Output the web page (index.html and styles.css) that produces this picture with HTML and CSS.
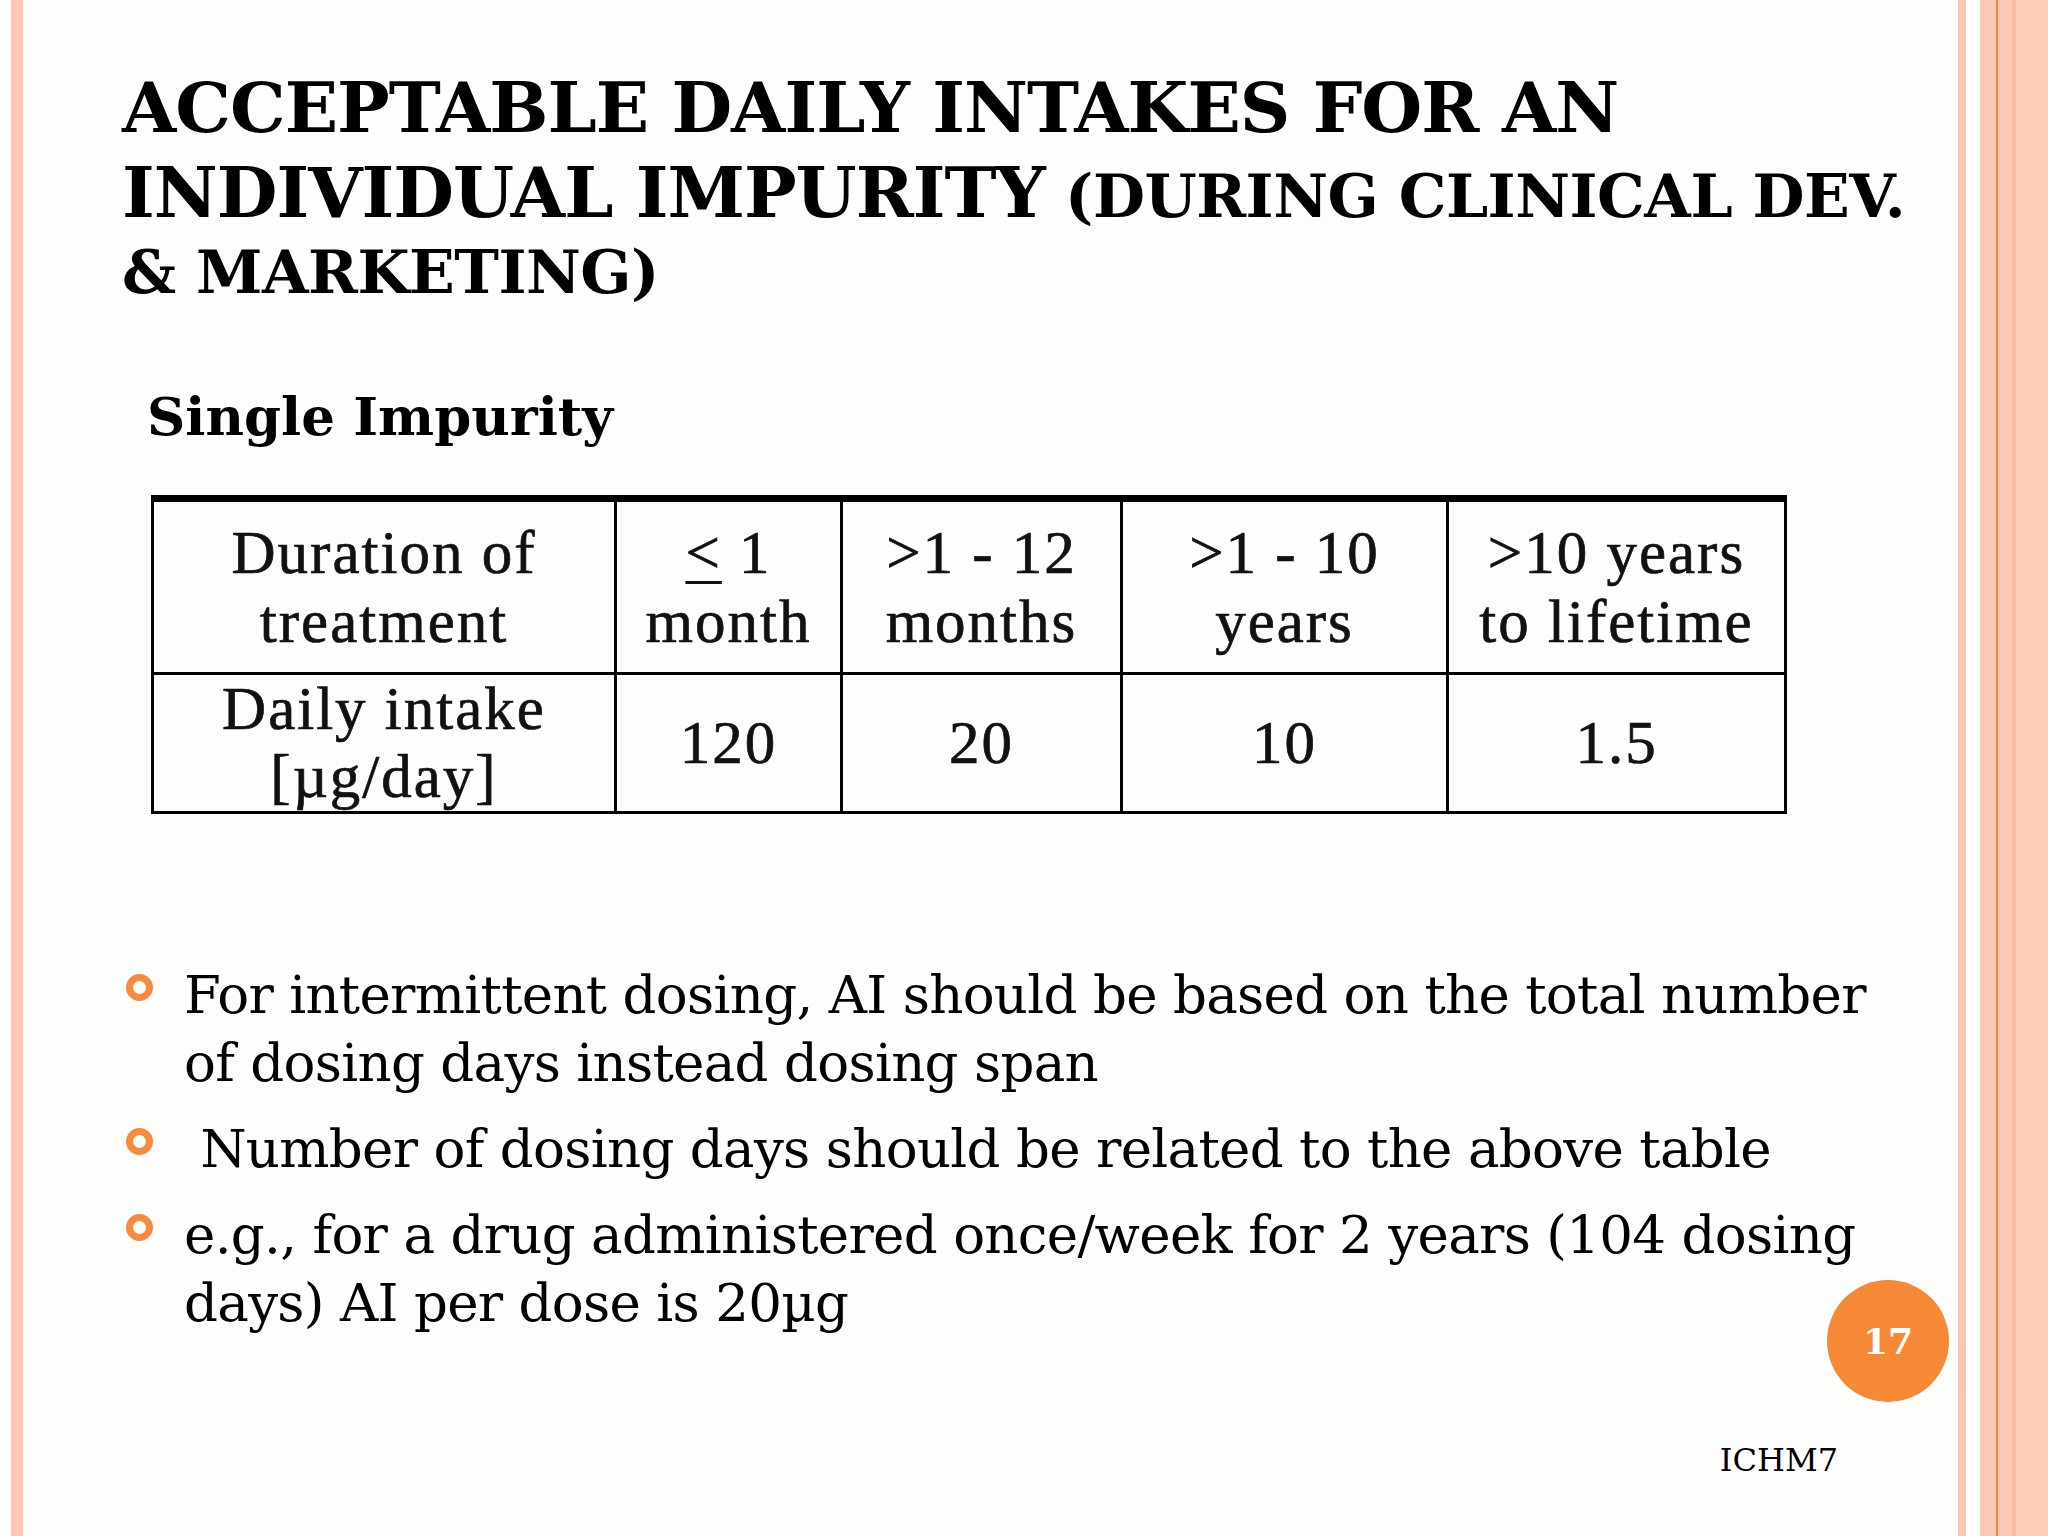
FILE: index.html
```html
<!DOCTYPE html>
<html lang="en">
<head>
<meta charset="utf-8">
<title>Acceptable daily intakes for an individual impurity</title>
<link rel="stylesheet" href="styles.css">
</head>
<body>
<div class="frame">
  <div class="rail-left"></div>
  <main class="content">
    <h1 class="title"><span class="big">ACCEPTABLE DAILY INTAKES FOR AN</span><br><span class="big">INDIVIDUAL IMPURITY</span> (DURING CLINICAL DEV.<br>&amp; MARKETING)</h1>
    <h2 class="subtitle">Single Impurity</h2>
    <table class="ai-table">
      <colgroup>
        <col class="c1"><col class="c2"><col class="c3"><col class="c4"><col class="c5">
      </colgroup>
      <tr class="r1">
        <td>Duration of<br>treatment</td>
        <td><span class="u">&lt;</span> 1<br>month</td>
        <td>&gt;1 - 12<br>months</td>
        <td>&gt;1 - 10<br>years</td>
        <td>&gt;10 years<br>to lifetime</td>
      </tr>
      <tr class="r2">
        <td>Daily intake<br>[µg/day]</td>
        <td>120</td>
        <td>20</td>
        <td>10</td>
        <td>1.5</td>
      </tr>
    </table>
    <ul class="bullets">
      <li><span>For intermittent dosing, AI should be based on the total number<br>of dosing days instead dosing span</span></li>
      <li><span>&nbsp;Number of dosing days should be related to the above table</span></li>
      <li><span>e.g., for a drug administered once/week for 2 years (104 dosing<br>days) AI per dose is 20µg</span></li>
    </ul>
    <div class="footer">ICHM7</div>
    <div class="page-num">17</div>
  </main>
  <div class="rail-right"></div>
</div>
</body>
</html>
```

FILE: styles.css
```css
html, body {
  margin: 0;
  padding: 0;
}
body {
  width: 2048px;
  height: 1536px;
  overflow: hidden;
  background: #fdfdfc;
  color: #000;
  font-family: "DejaVu Serif", "Liberation Serif", serif;
}
.frame {
  display: flex;
  height: 1536px;
}
.rail-left {
  flex: none;
  width: 23px;
  background: linear-gradient(to right, transparent 0 11px, #fbc6b2 11px 23px);
}
.rail-right {
  flex: none;
  width: 90px;
  background: linear-gradient(to right,
    #fbc6b2 0 8px,
    #fefefd 8px 22px,
    #fcc8b4 22px 38px,
    #f08a4b 38px 40px,
    #fcc8b4 40px 54px,
    #fabba3 54px 58px,
    #fccdb8 58px 90px);
}
.content {
  flex: 1;
  min-width: 0;
  position: relative;
  padding-left: 99px;
  display: flex;
  flex-direction: column;
  align-items: flex-start;
}
.title {
  margin: 65px 0 0 0;
  font-weight: bold;
  font-size: 60px;
  line-height: 74px;
  letter-spacing: -0.5px;
  white-space: nowrap;
}
.title .big {
  font-size: 70px;
  line-height: 85px;
  letter-spacing: -1px;
}
.subtitle {
  margin: 76px 0 0 25px;
  font-size: 53px;
  line-height: 62px;
  font-weight: bold;
}
.ai-table {
  margin: 48px 0 0 29px;
  border-collapse: collapse;
  table-layout: fixed;
  width: 1634px;
  border-top: 7px solid #000;
  font-family: "Liberation Serif", serif;
  font-size: 61px;
  letter-spacing: 2px;
  color: #111;
  -webkit-text-stroke: 0.7px #111;
}
.ai-table td {
  border: 3px solid #000;
  text-align: center;
  vertical-align: middle;
  padding: 0;
  line-height: 69px;
  white-space: nowrap;
  overflow: hidden;
}
.ai-table .r1 td { height: 170px; }
.ai-table .r2 td { height: 133px; line-height: 68px; }
.c1 { width: 463px; }
.c2 { width: 226px; }
.c3 { width: 280px; }
.c4 { width: 326px; }
.c5 { width: 338px; }
.u { text-decoration: underline; text-decoration-thickness: 3px; text-underline-offset: 8px; }
.bullets {
  list-style: none;
  margin: 147px 0 0 4px;
  padding: 0;
  font-size: 53px;
  line-height: 68px;
  letter-spacing: -0.7px;
  white-space: nowrap;
}
.bullets li {
  display: flex;
  align-items: flex-start;
}
.bullets li + li {
  margin-top: 18px;
}
.bullets li::before {
  content: "";
  flex: none;
  width: 27px;
  height: 27px;
  box-sizing: border-box;
  border: 7px solid #f68b3b;
  border-radius: 50%;
  margin-top: 13px;
  margin-right: 31px;
}
.footer {
  align-self: flex-end;
  margin: 104px 120px 0 0;
  font-size: 32px;
  line-height: 38px;
}
.page-num {
  position: absolute;
  left: 1804px;
  top: 1280px;
  width: 122px;
  height: 122px;
  border-radius: 50%;
  background: #f68935;
  color: #fff;
  font-weight: bold;
  font-size: 36px;
  display: flex;
  align-items: center;
  justify-content: center;
}
```
